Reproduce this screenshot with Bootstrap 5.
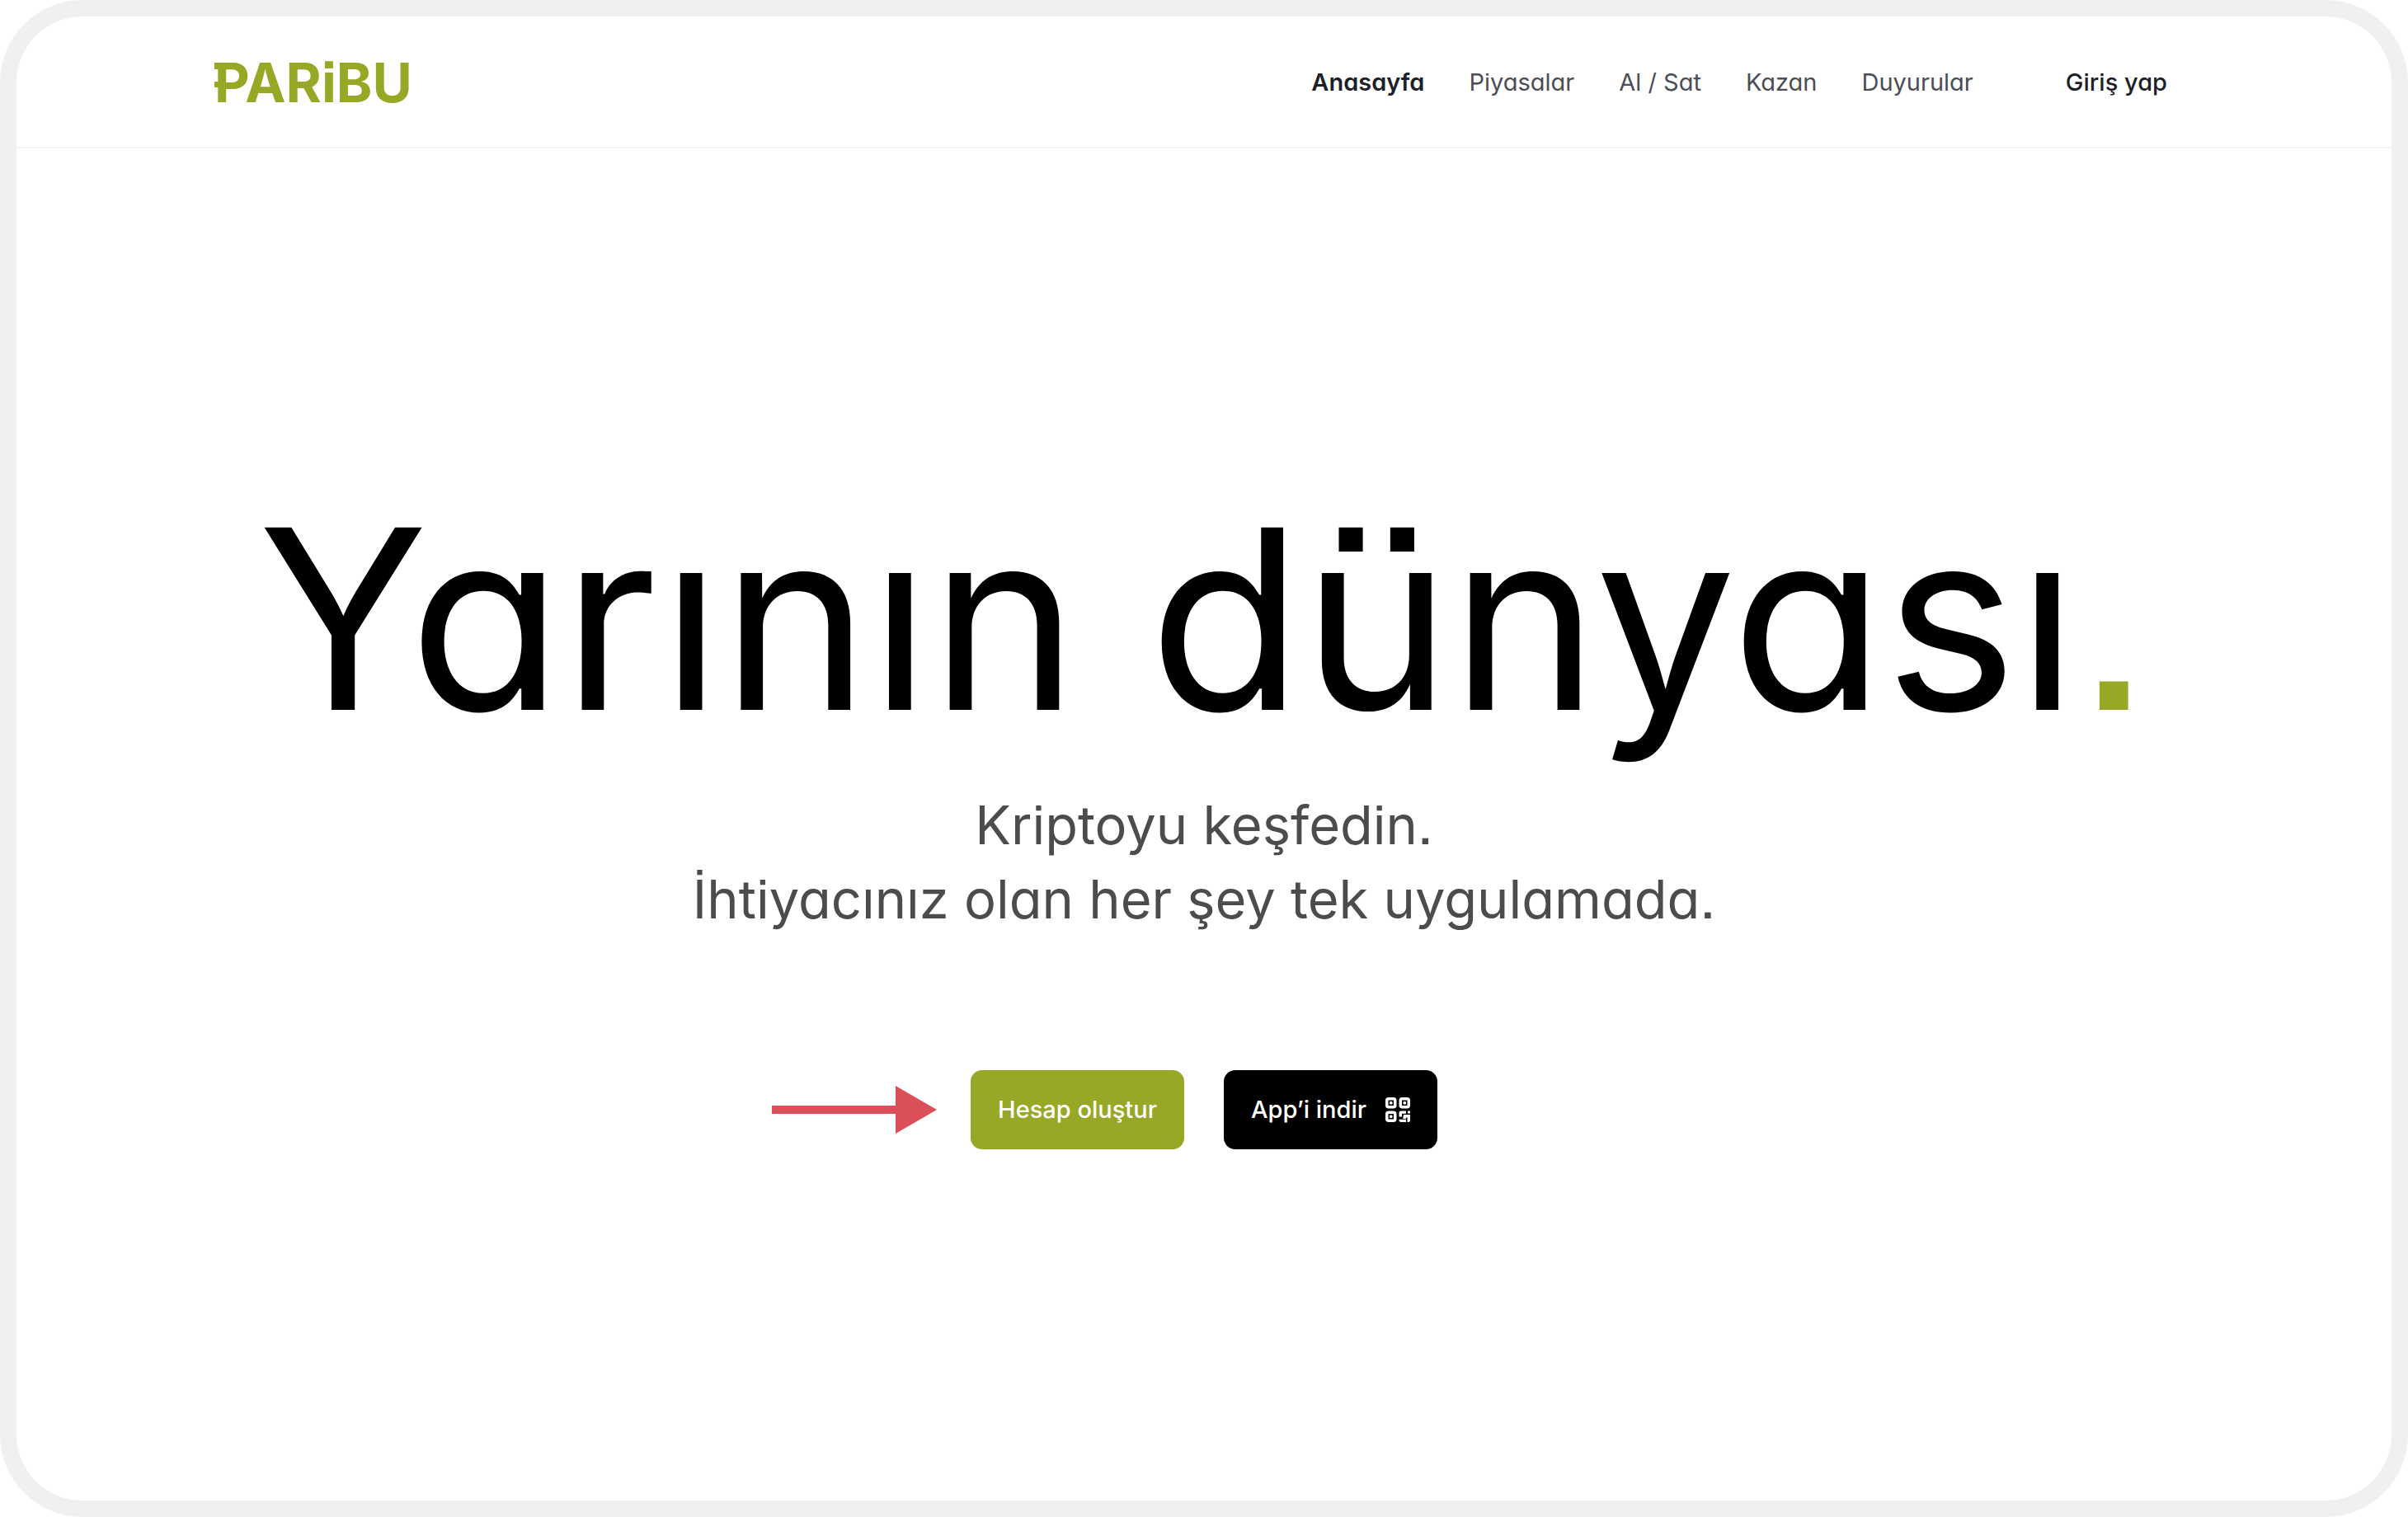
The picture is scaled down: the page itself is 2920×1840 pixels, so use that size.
<!DOCTYPE html>
<html lang="tr">
<head>
<meta charset="utf-8">
<meta name="viewport" content="width=device-width, initial-scale=1">
<title>Paribu</title>
<link href="https://cdn.jsdelivr.net/npm/bootstrap@5.3.0/dist/css/bootstrap.min.css" rel="stylesheet">
<style>
  :root { --brand: #97a827; --ink: #1d1f2a; --frame: #eff0f2; }
  body { font-family: Inter, "Open Sans", sans-serif; font-feature-settings: "cv11", "ss07"; color: #000; background: #fff; }
  .frame { border: 20px solid var(--frame); border-radius: 100px; }
  .topbar { height: 160px; padding: 2px 240px 0; border-bottom: 2px solid #f6f6f7; }
  .brand-word { position: relative; font-size: 66px; line-height: 80px; font-weight: 700; color: var(--brand); text-decoration: none; }
  .brand-word:hover { color: var(--brand); }
  .brand-word svg { position: absolute; left: 0; top: 16px; }
  .topbar .nav { gap: 54px; }
  .topbar .nav-link { padding: 0; font-size: 29px; line-height: 40px; color: #4c4d55; }
  .topbar .nav-link.active { font-weight: 600; color: var(--ink); }
  .topbar .login { font-weight: 500; color: var(--ink); margin-left: 58px; margin-right: 32px; }
  .hero-title { font-size: 304px; line-height: 288px; font-weight: 400; margin: 0 0 62px; white-space: nowrap; }
  .hero-title span { color: var(--brand); }
  .hero-text { font-size: 65px; line-height: 90px; color: #4c4c4c; margin: 0 0 162px; }
  .actions { gap: 48px; }
  .actions .btn { height: 96px; padding: 0 33px; border: 0; border-radius: 14px; font-size: 29px; font-weight: 500; color: #fff; }
  .btn-brand { background: var(--brand); }
  .btn-app { background: #000; gap: 23px; }
  .pointer { position: absolute; right: 100%; top: 19px; margin-right: 41px; }
</style>
</head>
<body>
<div class="frame min-vh-100 d-flex flex-column">
  <header class="topbar d-flex align-items-center justify-content-between">
    <a class="brand-word" href="#">PARiBU<svg width="20" height="48" viewBox="0 0 20 48" fill="#97a827" aria-hidden="true"><rect y="0" width="10" height="8"/><rect y="23" width="10" height="7"/></svg></a>
    <nav class="nav align-items-center">
      <a class="nav-link active" aria-current="page" href="#">Anasayfa</a>
      <a class="nav-link" href="#">Piyasalar</a>
      <a class="nav-link" href="#">Al / Sat</a>
      <a class="nav-link" href="#">Kazan</a>
      <a class="nav-link" href="#">Duyurular</a>
      <a class="nav-link login" href="#">Giriş yap</a>
    </nav>
  </header>
  <main class="flex-grow-1 d-flex flex-column align-items-center justify-content-center text-center">
    <h1 class="hero-title">Yarının dünyası<span>.</span></h1>
    <p class="hero-text">Kriptoyu keşfedin.<br>İhtiyacınız olan her şey tek uygulamada.</p>
    <div class="actions d-flex position-relative">
      <svg class="pointer" width="200" height="58" viewBox="0 0 200 58" fill="#db4f58" aria-hidden="true"><path d="M0 24H150V0L200 29L150 58V34H0Z"/></svg>
      <button type="button" class="btn btn-brand">Hesap oluştur</button>
      <button type="button" class="btn btn-app d-flex align-items-center">App’i indir
        <svg width="30" height="30" viewBox="0 0 30 30" aria-hidden="true">
          <g fill="none" stroke="#fff" stroke-width="3.5"><rect x="1.75" y="1.750" width="10" height="10" rx="2"/><rect x="18.250" y="1.750" width="10" height="10" rx="2"/><rect x="1.750" y="18.250" width="10" height="10" rx="2"/></g>
          <g fill="#fff"><rect x="5" y="5" width="3.500" height="3.500" rx="1.200"/><rect x="21.500" y="5" width="3.500" height="3.500" rx="1.200"/><rect x="5" y="21.500" width="3.500" height="3.500" rx="1.200"/>
          <path d="M19 16.500h6v3.300h-5v3.700h-3.500v-4.500q0-2.500 2.500-2.500zM27 16.500h3v3h-3zM22 21h8v7q0 2-2 2h-1.500v-5.500h-1.500v1.500h-3.500v-3.500h.500zM16.500 26.700h8.500v3.300h-6q-2.500 0-2.500-2z"/></g>
        </svg>
      </button>
    </div>
  </main>
</div>
<script src="https://cdn.jsdelivr.net/npm/bootstrap@5.3.0/dist/js/bootstrap.bundle.min.js"></script>
</body>
</html>
